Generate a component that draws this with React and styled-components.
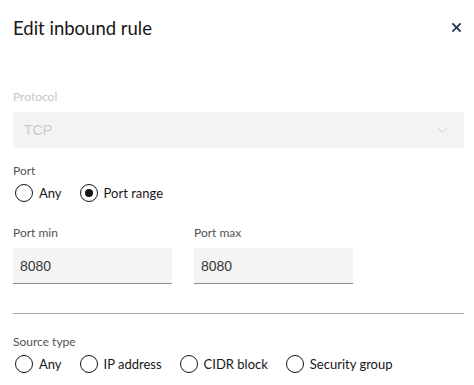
import React from "react";
import styled, { createGlobalStyle } from "styled-components";

const Global = createGlobalStyle`
  html, body { margin: 0; padding: 0; background: #ffffff; }
  body { font-family: Lato, "Noto Sans", sans-serif; color: #161616; }
  * { box-sizing: border-box; }
`;

const Modal = styled.div`
  width: 474px;
  height: 385px;
  padding: 0 10px 0 13px;
  display: flex;
  flex-direction: column;
  overflow: hidden;
`;

const Header = styled.div`
  display: flex;
  align-items: center;
  justify-content: space-between;
  height: 54px;
  padding-top: 1px;
`;

const Title = styled.h2`
  margin: 0;
  font-size: 18.5px;
  font-weight: 400;
  line-height: 28px;
  color: #161616;
`;

const CloseButton = styled.button`
  border: 0;
  background: transparent;
  padding: 0;
  width: 10px;
  height: 10px;
  margin-right: 3px;
  display: flex;
  align-items: center;
  justify-content: center;
  cursor: pointer;
`;

const Field = styled.div`
  display: flex;
  flex-direction: column;
  margin-top: ${(p) => p.$top || 0}px;
`;

const Label = styled.label`
  font-size: 12px;
  line-height: 16px;
  color: ${(p) => (p.$disabled ? "#c6c6c6" : "#525252")};
  margin-bottom: ${(p) => (p.$gap !== undefined ? p.$gap : 7)}px;
`;

const Select = styled.div`
  height: 36px;
  background: #f4f4f4;
  display: flex;
  align-items: center;
  justify-content: space-between;
  padding: 0 16px 0 11px;
  font-family: "Liberation Sans", Arial, sans-serif;
  font-size: 14px;
  color: #cacaca;
`;

const RadioGroup = styled.div`
  display: flex;
  align-items: center;
  height: 20px;
`;

const RadioItem = styled.label`
  display: flex;
  align-items: center;
  margin-right: ${(p) => p.$gap}px;
  font-size: 13px;
  color: #161616;
`;

const Circle = styled.span`
  width: 18px;
  height: 18px;
  border-radius: 50%;
  border: 1px solid #161616;
  margin: 0 6px 0 2px;
  display: flex;
  align-items: center;
  justify-content: center;
  &::after {
    content: "";
    width: 8px;
    height: 8px;
    border-radius: 50%;
    background: #161616;
    display: ${(p) => (p.$checked ? "block" : "none")};
  }
`;

const Row = styled.div`
  display: flex;
  gap: 22px;
  margin-top: 22px;
`;

const Input = styled.div`
  width: 159px;
  height: 36px;
  background: #f4f4f4;
  border-bottom: 1px solid #8d8d8d;
  display: flex;
  align-items: center;
  padding-left: 7px;
  font-family: "Liberation Sans", Arial, sans-serif;
  font-size: 14px;
  color: #393939;
`;

const Divider = styled.hr`
  border: 0;
  height: 1px;
  background: #a8a8a8;
  margin: 29px 0 0 0;
`;

function Radio({ label, checked, gap }) {
  return (
    <RadioItem $gap={gap}>
      <Circle $checked={checked} />
      {label}
    </RadioItem>
  );
}

export default function App() {
  return (
    <>
      <Global />
      <Modal>
        <Header>
          <Title>Edit inbound rule</Title>
          <CloseButton aria-label="Close">
            <svg width="9" height="9" viewBox="0 0 9 9">
              <path d="M1 1 L8 8 M8 1 L1 8" stroke="#2e3a5a" strokeWidth="1.8" strokeLinecap="square" />
            </svg>
          </CloseButton>
        </Header>

        <Field $top={35}>
          <Label $disabled>Protocol</Label>
          <Select>
            <span>TCP</span>
            <svg width="11" height="7" viewBox="0 0 11 7">
              <path d="M0.5 0.5 L5.5 5.5 L10.5 0.5" fill="none" stroke="#d0d0d0" strokeWidth="1" />
            </svg>
          </Select>
        </Field>

        <Field $top={15}>
          <Label $gap={4}>Port</Label>
          <RadioGroup>
            <Radio label="Any" gap={16} />
            <Radio label="Port range" checked gap={16} />
          </RadioGroup>
        </Field>

        <Row>
          <Field>
            <Label>Port min</Label>
            <Input>8080</Input>
          </Field>
          <Field>
            <Label>Port max</Label>
            <Input>8080</Input>
          </Field>
        </Row>

        <Divider />

        <Field $top={20}>
          <Label $gap={4}>Source type</Label>
          <RadioGroup>
            <Radio label="Any" gap={16} />
            <Radio label="IP address" gap={16} />
            <Radio label="CIDR block" gap={16} />
            <Radio label="Security group" gap={16} />
          </RadioGroup>
        </Field>
      </Modal>
    </>
  );
}
